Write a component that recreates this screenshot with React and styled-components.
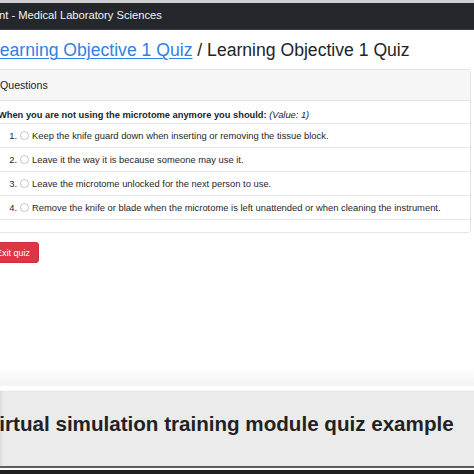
import React from 'react';
import styled, { createGlobalStyle } from 'styled-components';

const GlobalStyle = createGlobalStyle`
    html, body {
        margin: 0;
        padding: 0;
        background: #fff;
        overflow: hidden;
    }
    body {
        font-family: "Liberation Sans", Arial, sans-serif;
        color: #212529;
    }
`

const Page = styled.div`
    width: 474px;
    height: 474px;
    display: flex;
    flex-direction: column;
    overflow: hidden;
`

const TopStrip = styled.div`
    height: 3px;
    background: #cfd1d3;
`

const NavBar = styled.div`
    height: 26px;
    background: #24272b;
    display: flex;
    align-items: center;
    color: #f4f4f4;
    font-size: 11.2px;
    border-bottom: 1px solid #3a3d41;
`

const Brand = styled.span`
    white-space: nowrap;
    margin-left: -1px;
    padding-bottom: 2px;
`

const Main = styled.div`
    display: flex;
    flex-direction: column;
    align-items: flex-start;
    margin-left: -10px;
    width: 481px;
`

const Title = styled.h1`
    margin: 8px 0 7px;
    font-size: 17.6px;
    line-height: 24px;
    font-weight: 400;
    white-space: nowrap;

    a {
        color: #2f80e6;
        text-decoration: underline;
        text-decoration-thickness: 1px;
        text-underline-offset: 2px;
    }
`

const Card = styled.div`
    align-self: stretch;
    border: 1px solid #e4e4e4;
    border-radius: 3px;
    width: 479px;
`

const CardHeader = styled.div`
    height: 30px;
    display: flex;
    align-items: center;
    padding-left: 9px;
    background: #f6f6f6;
    border-bottom: 1px solid #e4e4e4;
    font-size: 10.6px;
`

const CardBody = styled.div`
    padding: 8px 0 12px 8px;
`

const Question = styled.div`
    font-size: 9.3px;
    font-weight: 700;
    line-height: 12px;
    margin-bottom: 2px;
    margin-left: -1px;
    white-space: nowrap;

    em {
        font-weight: 400;
    }
`

const OptionRow = styled.div`
    height: 23px;
    display: flex;
    align-items: center;
    border-top: 1px solid #e6e6e6;
    font-size: 9.4px;
    color: #262626;
    white-space: nowrap;

    &:last-child {
        border-bottom: 1px solid #e6e6e6;
    }
`

const Num = styled.span`
    width: 10px;
    margin-left: 8px;
    text-align: right;
`

const Radio = styled.span`
    box-sizing: border-box;
    width: 9px;
    height: 9px;
    border: 1px solid #c4c4c4;
    border-radius: 50%;
    margin: 0 3px 0 3px;
    background: #fff;
`

const ExitButton = styled.button`
    margin: 9px 0 0 -3px;
    height: 21px;
    padding: 0 8px;
    background: #dc3545;
    border: 1px solid #d22c3d;
    border-radius: 3px;
    color: #fff;
    font-family: inherit;
    font-size: 9px;
`

const Spacer = styled.div`
    flex: 1;
`

const Footer = styled.div`
    display: flex;
    flex-direction: column;
`

const Fade = styled.div`
    height: 19px;
    background: linear-gradient(#fff, #f3f3f3);
`

const Caption = styled.div`
    height: 76px;
    margin-top: 4px;
    display: flex;
    align-items: center;
    background: #ebebeb;
    border-top: 1px solid #f7f7f7;
    box-shadow: inset 2px 0 2px rgba(0, 0, 0, 0.06);
    font-size: 20.6px;
    font-weight: 700;
    color: #222;
    white-space: nowrap;
    text-indent: -14px;
    padding-bottom: 10px;
    box-sizing: border-box;
`

const Rule = styled.div`
    height: ${p => p.h}px;
    background: ${p => p.c};
`

const options = [
    'Keep the knife guard down when inserting or removing the tissue block.',
    'Leave it the way it is because someone may use it.',
    'Leave the microtome unlocked for the next person to use.',
    'Remove the knife or blade when the microtome is left unattended or when cleaning the instrument.',
];

function App() {
    return (
        <Page>
            <GlobalStyle />
            <TopStrip />
            <NavBar>
                <Brand>nt - Medical Laboratory Sciences</Brand>
            </NavBar>
            <Main>
                <Title>
                    <a href="#quiz">Learning Objective 1 Quiz</a> / Learning Objective 1 Quiz
                </Title>
                <Card>
                    <CardHeader>Questions</CardHeader>
                    <CardBody>
                        <Question>
                            When you are not using the microtome anymore you should: <em>(Value: <i>1</i>)</em>
                        </Question>
                        {options.map((text, i) => (
                            <OptionRow key={i}>
                                <Num>{i + 1}.</Num>
                                <Radio />
                                <span>{text}</span>
                            </OptionRow>
                        ))}
                    </CardBody>
                </Card>
                <ExitButton>Exit quiz</ExitButton>
            </Main>
            <Spacer />
            <Footer>
                <Fade />
                <Caption>Virtual simulation training module quiz example</Caption>
                <Rule h={2} c="#5d5d5d" />
                <Rule h={2} c="#fafafa" />
                <Rule h={4} c="#1f1f1f" />
            </Footer>
        </Page>
    );
}

export default App;
